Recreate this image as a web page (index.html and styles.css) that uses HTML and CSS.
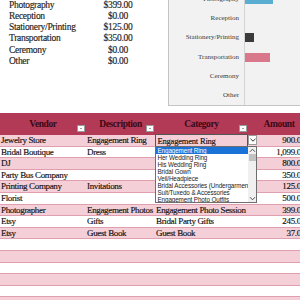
FILE: index.html
```html
<!DOCTYPE html>
<html>
<head>
<meta charset="utf-8">
<link rel="stylesheet" href="styles.css">
</head>
<body>
<div class="top">
  <div class="summary">
    <div class="srow"><span class="slabel">Photography</span><span class="sval">$399.00</span></div>
    <div class="srow"><span class="slabel">Reception</span><span class="sval">$0.00</span></div>
    <div class="srow"><span class="slabel">Stationery/Printing</span><span class="sval">$125.00</span></div>
    <div class="srow"><span class="slabel">Transportation</span><span class="sval">$350.00</span></div>
    <div class="srow"><span class="slabel">Ceremony</span><span class="sval">$0.00</span></div>
    <div class="srow"><span class="slabel">Other</span><span class="sval">$0.00</span></div>
  </div>
  <div class="chart">
    <div class="crow"><span class="clabel">Photography</span><span class="plot"><span class="bar blue" style="width:28px"></span></span></div>
    <div class="crow"><span class="clabel">Reception</span><span class="plot"></span></div>
    <div class="crow"><span class="clabel">Stationery/Printing</span><span class="plot"><span class="bar dark" style="width:9px"></span></span></div>
    <div class="crow"><span class="clabel">Transportation</span><span class="plot"><span class="bar pink" style="width:25px"></span></span></div>
    <div class="crow"><span class="clabel">Ceremony</span><span class="plot"></span></div>
    <div class="crow"><span class="clabel">Other</span><span class="plot"></span></div>
  </div>
</div>

<div class="table">
  <div class="row head">
    <div class="cell">Vendor<span class="filter"></span></div>
    <div class="cell">Description<span class="filter"></span></div>
    <div class="cell">Category<span class="filter"></span></div>
    <div class="cell">Amount</div>
  </div>
  <div class="row"><div class="cell">Jewelry Store</div><div class="cell">Engagement Ring</div><div class="cell"></div><div class="cell amt">900.00</div></div>
  <div class="row"><div class="cell">Bridal Boutique</div><div class="cell">Dress</div><div class="cell"></div><div class="cell amt">1,099.00</div></div>
  <div class="row"><div class="cell">DJ</div><div class="cell"></div><div class="cell"></div><div class="cell amt">800.00</div></div>
  <div class="row"><div class="cell">Party Bus Company</div><div class="cell"></div><div class="cell"></div><div class="cell amt">350.00</div></div>
  <div class="row"><div class="cell">Printing Company</div><div class="cell">Invitations</div><div class="cell"></div><div class="cell amt">125.00</div></div>
  <div class="row"><div class="cell">Florist</div><div class="cell"></div><div class="cell"></div><div class="cell amt">500.00</div></div>
  <div class="row"><div class="cell">Photographer</div><div class="cell">Engagement Photos</div><div class="cell">Engagement Photo Session</div><div class="cell amt">399.00</div></div>
  <div class="row"><div class="cell">Etsy</div><div class="cell">Gifts</div><div class="cell">Bridal Party Gifts</div><div class="cell amt">245.00</div></div>
  <div class="row"><div class="cell">Etsy</div><div class="cell">Guest Book</div><div class="cell">Guest Book</div><div class="cell amt">37.00</div></div>
  <div class="row"><div class="cell"></div><div class="cell"></div><div class="cell"></div><div class="cell"></div></div>
  <div class="row"><div class="cell"></div><div class="cell"></div><div class="cell"></div><div class="cell"></div></div>
  <div class="row"><div class="cell"></div><div class="cell"></div><div class="cell"></div><div class="cell"></div></div>
  <div class="row"><div class="cell"></div><div class="cell"></div><div class="cell"></div><div class="cell"></div></div>
  <div class="row"><div class="cell"></div><div class="cell"></div><div class="cell"></div><div class="cell"></div></div>
  <div class="row"><div class="cell"></div><div class="cell"></div><div class="cell"></div><div class="cell"></div></div>

  <div class="combo-edit">Engagement Ring</div>
  <div class="combo-btn"><svg width="6" height="4" viewBox="0 0 6 4"><path d="M0.5 0.8 L3 3.2 L5.5 0.8" fill="none" stroke="#333" stroke-width="1"/></svg></div>
  <div class="combo-list">
    <ul class="items">
      <li class="sel">Engagement Ring</li>
      <li>Her Wedding Ring</li>
      <li>His Wedding Ring</li>
      <li>Bridal Gown</li>
      <li>Veil/Headpiece</li>
      <li>Bridal Accessories (Undergarmen</li>
      <li>Suit/Tuxedo &amp; Accessories</li>
      <li>Engagement Photo Outfits</li>
    </ul>
    <div class="scroll">
      <svg class="arr" width="7" height="5" viewBox="0 0 7 5"><path d="M1 3.8 L3.5 1.2 L6 3.8" fill="none" stroke="#555" stroke-width="1"/></svg>
      <div class="thumb"></div>
      <div class="track"></div>
      <svg class="arr" width="7" height="5" viewBox="0 0 7 5"><path d="M1 1.2 L3.5 3.8 L6 1.2" fill="none" stroke="#555" stroke-width="1"/></svg>
    </div>
  </div>
</div>
</body>
</html>
```

FILE: styles.css
```css
html, body {
  margin: 0;
  padding: 0;
  overflow: hidden;
}
body {
  width: 300px;
  height: 300px;
  background: #ffffff;
  font-family: "Liberation Serif", "Times New Roman", serif;
  color: #111111;
}

/* top area */
.top {
  display: flex;
  height: 105px;
}
.summary {
  width: 168px;
  flex: none;
  padding-left: 9px;
  box-sizing: border-box;
}
.srow {
  display: grid;
  grid-template-columns: 86px 46px;
  height: 11.3px;
  line-height: 11.3px;
  font-size: 9.5px;
  letter-spacing: -0.3px;
  color: #1e1e1e;
  -webkit-text-stroke: 0.15px #1e1e1e;
}
.srow:first-child { margin-top: -0.5px; }
.sval { text-align: center; }

.chart {
  flex: 1;
  margin-top: -10px;
  height: 116px;
  background: #f2f2f2;
  border-left: 1px solid #c4c4c4;
  border-bottom: 1px solid #c4c4c4;
  box-sizing: border-box;
}
.crow {
  display: flex;
  height: 19.2px;
}
.clabel {
  width: 75px;
  flex: none;
  box-sizing: border-box;
  padding-right: 5px;
  text-align: right;
  font-size: 7px;
  line-height: 19.2px;
  color: #3a3a3a;
  white-space: nowrap;
}
.plot {
  flex: 1;
  display: flex;
  align-items: center;
  border-left: 1px solid #d4d4d4;
}
.bar { height: 9px; display: block; }
.blue { background: #5aaed2; }
.dark { background: #3b3b3b; }
.pink { background: #d9778b; }

/* table */
.table {
  position: relative;
  margin-top: 8px;
  width: 310px;
}
.row {
  display: grid;
  grid-template-columns: 86px 69px 93px 62px;
  height: 11.6px;
  box-sizing: border-box;
  border-bottom: 1px solid #e09fae;
  font-size: 9px;
  letter-spacing: -0.35px;
  line-height: 10.6px;
  color: #111111;
  -webkit-text-stroke: 0.15px #111111;
}
.row:nth-child(even) { background: #f4cfd7; }
.row:nth-child(odd) { background: #ffffff; }
.cell {
  padding-left: 1px;
  white-space: nowrap;
  overflow: hidden;
}
.cell.amt {
  text-align: right;
  padding-right: 5px;
  padding-left: 0;
}
.row.head {
  height: 22px;
  background: #b33a56;
  border-bottom: none;
  font-weight: bold;
  font-size: 9.5px;
  letter-spacing: -0.4px;
  color: #3a0915;
  -webkit-text-stroke: 0;
  line-height: 22px;
}
.row.head .cell {
  position: relative;
  text-align: center;
  padding: 0;
  overflow: visible;
}
.filter {
  position: absolute;
  right: 1px;
  bottom: 3px;
  width: 8px;
  height: 7px;
  box-sizing: border-box;
  background: #ffffff;
  border: 1px solid #9a9a9a;
}
.filter::after {
  content: "";
  position: absolute;
  left: 1.5px;
  top: 2px;
  border-left: 1.5px solid transparent;
  border-right: 1.5px solid transparent;
  border-top: 1.5px solid #444;
}

/* combobox */
.combo-edit {
  position: absolute;
  left: 155px;
  top: 21px;
  width: 93px;
  height: 13px;
  box-sizing: border-box;
  border: 1px solid #555;
  padding-left: 1.5px;
  font-size: 8.5px;
  letter-spacing: -0.2px;
  line-height: 12px;
  color: #111;
  -webkit-text-stroke: 0.15px #111;
}
.combo-btn {
  position: absolute;
  left: 248px;
  top: 22px;
  width: 9px;
  height: 10px;
  box-sizing: border-box;
  background: #ffffff;
  border: 1px solid #9a9a9a;
  display: flex;
  align-items: center;
  justify-content: center;
}
.combo-list {
  position: absolute;
  left: 155px;
  top: 33px;
  width: 102px;
  height: 57px;
  box-sizing: border-box;
  background: #ffffff;
  border: 1px solid #6e6e6e;
  display: flex;
}
.items {
  list-style: none;
  margin: 0;
  padding: 0;
  flex: 1;
  overflow: hidden;
  font-family: "Liberation Sans", Arial, sans-serif;
  font-size: 6.3px;
  letter-spacing: -0.1px;
  line-height: 7px;
  color: #222;
}
.items li {
  padding-left: 1.5px;
  white-space: nowrap;
  height: 7px;
}
.items li.sel {
  background: #1a72d6;
  color: #ffffff;
}
.scroll {
  width: 8px;
  flex: none;
  background: #f0f0f0;
  display: flex;
  flex-direction: column;
  align-items: center;
}
.arr { display: block; margin: 1px 0; flex: none; }
.thumb {
  width: 7px;
  height: 7px;
  background: #c2c2c2;
  flex: none;
}
.track { flex: 1; }
```
